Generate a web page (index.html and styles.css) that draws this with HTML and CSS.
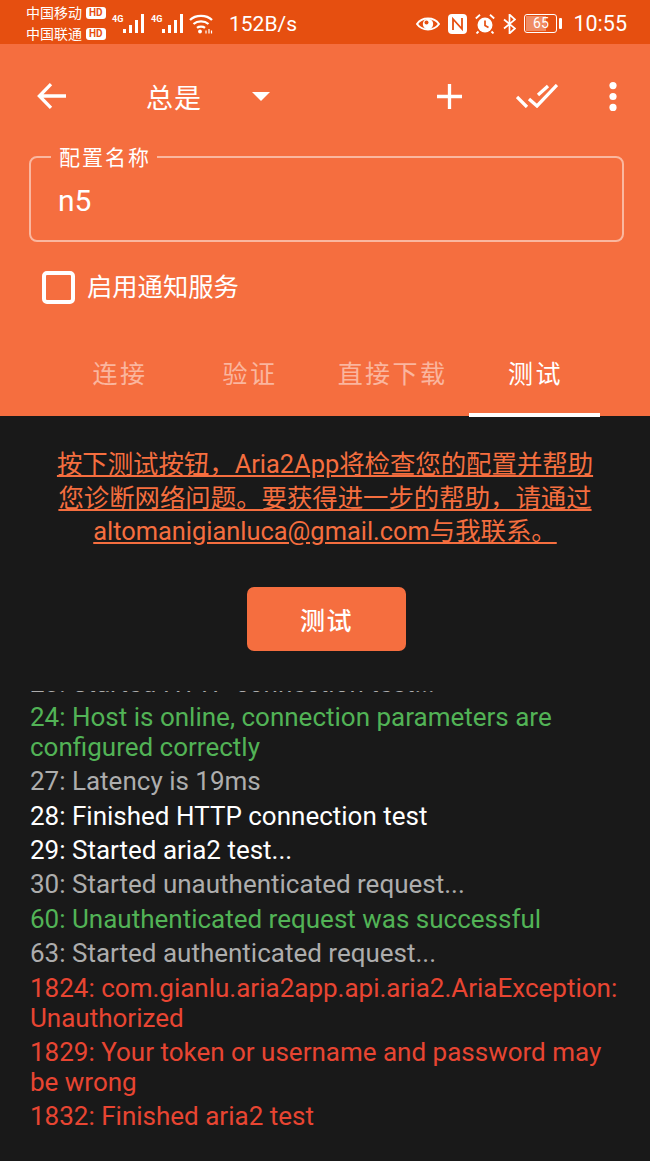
FILE: index.html
```html
<!DOCTYPE html>
<html lang="en">
  <head>
    <meta charset="UTF-8" />
    <meta name="viewport" content="width=device-width, initial-scale=1.0" />
    <title>Aria2App</title>
    <link rel="stylesheet" href="styles.css">
  </head>

  <body>
    <div class="status_bar">
      <div class="carriers">
        <div class="carrier"><span>中国移动</span><b class="hd">HD</b></div>
        <div class="carrier"><span>中国联通</span><b class="hd">HD</b></div>
      </div>
      <div class="signal">
        <span class="tag">4G</span>
        <svg width="21" height="20" viewBox="0 0 21 20" fill="#fff"><rect x="0" y="15" width="3" height="4"/><rect x="6" y="11" width="3" height="8"/><rect x="12" y="6" width="3" height="13"/><rect x="18" y="0" width="3" height="19"/></svg>
      </div>
      <div class="signal">
        <span class="tag">4G</span>
        <svg width="21" height="20" viewBox="0 0 21 20" fill="#fff"><rect x="0" y="15" width="3" height="4"/><rect x="6" y="11" width="3" height="8"/><rect x="12" y="6" width="3" height="13"/><rect x="18" y="0" width="3" height="19"/></svg>
      </div>
      <svg class="wifi" width="24" height="20" viewBox="0 0 24 20" fill="none" stroke="#fff" stroke-width="2.300"><path d="M1 6C6.500 0.500 17.500 0.500 23 6"/><path d="M4.500 10C8.500 6.500 15.500 6.500 19.500 10"/><path d="M8 13.800C10 12.300 14 12.300 16 13.800"/><circle cx="11" cy="17.500" r="1.900" fill="#fff" stroke="none"/><path d="M17 16.500v3M20 15v4.500M22.500 16.500v3" stroke-width="1.200"/></svg>
      <span class="speed">152B/s</span>
      <div class="status_right">
        <svg class="ic_eye" width="24" height="16" viewBox="0 0 24 16"><path d="M1 8C6 0.800 18 0.800 23 8C18 15.200 6 15.200 1 8Z" fill="none" stroke="#fff" stroke-width="2"/><circle cx="12" cy="8" r="5.200" fill="#fff"/><circle cx="10.500" cy="6.500" r="2" fill="#e64f10"/></svg>
        <svg class="ic_nfc" width="19" height="20" viewBox="0 0 19 20"><rect x="0" y="0" width="19" height="20" rx="4" fill="#fff"/><path d="M5 16V5L14 15V4" fill="none" stroke="#e64f10" stroke-width="1.800"/></svg>
        <svg class="ic_alarm" width="20" height="20" viewBox="0 0 20 20"><circle cx="10" cy="11" r="7.500" fill="#fff"/><path d="M10 6.500v5l3.500 2" fill="none" stroke="#e64f10" stroke-width="1.700"/><path d="M0.800 4.500L5 0.800M19.200 4.500L15 0.800M3.500 17.500l-2 2M16.500 17.500l2 2" stroke="#fff" stroke-width="1.800"/></svg>
        <svg class="ic_bt" width="13" height="20" viewBox="0 0 13 20" fill="none" stroke="#fff" stroke-width="1.700"><path d="M1 5.500L12 14.500L6.500 19.500V0.500L12 5.500L1 14.500"/></svg>
        <div class="battery">
          <div class="battery_body"><span class="battery_fill"></span><span class="battery_num">65</span></div>
          <span class="battery_tip"></span>
        </div>
        <span class="clock">10:55</span>
      </div>
    </div>

    <div class="head">
      <div class="toolbar">
        <svg class="back" width="29" height="26" viewBox="0 0 29 26" fill="none" stroke="#fff" stroke-width="3.300"><path d="M29 13H3M14 1.200L2.400 13L14 24.800"/></svg>
        <span class="spinner_text">总是</span>
        <span class="spinner_arrow"></span>
        <svg class="plus" width="25" height="25" viewBox="0 0 25 25" stroke="#fff" stroke-width="3.300"><path d="M12.500 0V25M0 12.500H25"/></svg>
        <svg class="checks" width="42" height="24" viewBox="0 0 42 24" fill="none" stroke="#fff" stroke-width="3.300"><path d="M1 13L11 23M13 15L21 22L41 1M22 11L32 2"/></svg>
        <svg class="more" width="8" height="29" viewBox="0 0 8 29" fill="#fff"><circle cx="4" cy="3.600" r="3.600"/><circle cx="4" cy="14.500" r="3.600"/><circle cx="4" cy="25.400" r="3.600"/></svg>
      </div>

      <div class="field">
        <label class="field_label">配置名称</label>
        <div class="field_value">n5</div>
      </div>

      <div class="check_row">
        <span class="checkbox"></span>
        <span>启用通知服务</span>
      </div>

      <div class="tabs">
        <div class="tab">连接</div>
        <div class="tab">验证</div>
        <div class="tab tab_wide">直接下载</div>
        <div class="tab active">测试</div>
      </div>
    </div>

    <div class="content">
      <p class="help">按下测试按钮，Aria2App将检查您的配置并帮助您诊断网络问题。要获得进一步的帮助，请通过altomanigianluca@gmail.com与我联系。</p>
      <button class="test_btn">测试</button>
      <div class="log">
        <div class="log_inner">
          <p class="grey">20: Started HTTP connection test...</p>
          <p class="green">24: Host is online, connection parameters are configured correctly</p>
          <p class="grey">27: Latency is 19ms</p>
          <p class="white">28: Finished HTTP connection test</p>
          <p class="white">29: Started aria2 test...</p>
          <p class="grey">30: Started unauthenticated request...</p>
          <p class="green">60: Unauthenticated request was successful</p>
          <p class="grey">63: Started authenticated request...</p>
          <p class="red">1824: com.gianlu.aria2app.api.aria2.AriaException: Unauthorized</p>
          <p class="red">1829: Your token or username and password may be wrong</p>
          <p class="red">1832: Finished aria2 test</p>
        </div>
      </div>
    </div>
  </body>
</html>
```

FILE: styles.css
```css
* {
  padding: 0;
  margin: 0;
  box-sizing: border-box;
}
body {
  width: 650px;
  height: 1161px;
  overflow: hidden;
  background: #191919;
  color: #fff;
  font-family: "Roboto", "Noto Sans CJK SC", sans-serif;
}

/* status bar */
.status_bar {
  height: 44px;
  padding: 3px 23px 0 26px;
  background: #e64f10;
  display: flex;
  align-items: center;
}
.carriers {
  width: 86px;
  font-size: 14px;
  line-height: 21px;
}
.carrier {
  display: flex;
  align-items: center;
  gap: 4px;
  white-space: nowrap;
}
.hd {
  background: #fff;
  color: #e64f10;
  font-size: 10px;
  line-height: 12px;
  padding: 0 3px;
  border-radius: 3px;
}
.signal {
  display: flex;
  align-items: flex-start;
  width: 39px;
}
.tag {
  width: 11px;
  margin: 1px 0 0;
  font-size: 9px;
  font-weight: 700;
  line-height: 9px;
}
.wifi {
  margin-left: -1px;
}
.speed {
  margin-left: 16px;
  font-size: 21px;
}
.status_right {
  margin-left: auto;
  display: flex;
  align-items: center;
  gap: 8px;
}
.battery {
  display: flex;
  align-items: center;
  gap: 2px;
}
.battery_body {
  position: relative;
  width: 33px;
  height: 19px;
  border: 1.500px solid #fff;
  border-radius: 3px;
  font-size: 14px;
  line-height: 16px;
  text-align: center;
}
.battery_fill {
  position: absolute;
  left: 1px;
  top: 1px;
  bottom: 1px;
  width: 20px;
  background: rgba(255, 255, 255, 0.35);
}
.battery_num {
  position: relative;
}
.battery_tip {
  width: 3px;
  height: 11px;
  background: #fff;
  border-radius: 1px;
}
.clock {
  margin-left: 3px;
  font-size: 21.500px;
}

/* orange head */
.head {
  height: 372px;
  background: #f56e3f;
}
.toolbar {
  height: 104px;
  padding-left: 37px;
  display: flex;
  align-items: center;
}
.spinner_text {
  margin-left: 80px;
  font-size: 27px;
  letter-spacing: 1px;
}
.spinner_arrow {
  margin-left: 50px;
  border-left: 9px solid transparent;
  border-right: 9px solid transparent;
  border-top: 9px solid #fff;
}
.plus {
  margin-left: 167px;
}
.checks {
  margin-left: 54px;
}
.more {
  margin-left: 51px;
}
.field {
  position: relative;
  width: 595px;
  height: 86px;
  margin: 8px 0 0 29px;
  padding: 25px 27px 0;
  border: 2px solid rgba(255, 255, 255, 0.5);
  border-radius: 8px;
}
.field_label {
  position: absolute;
  left: 20px;
  top: -13px;
  padding: 0 6px 0 8px;
  background: #f56e3f;
  font-size: 21px;
  letter-spacing: 2px;
  line-height: 26px;
}
.field_value {
  font-size: 30px;
  line-height: 36px;
}
.check_row {
  margin: 29px 0 0 42px;
  display: flex;
  align-items: center;
  gap: 12px;
  font-size: 25.300px;
  line-height: 33px;
}
.checkbox {
  width: 33px;
  height: 33px;
  border: 4px solid #fff;
  border-radius: 5px;
}
.tabs {
  margin-top: 46px;
  padding-left: 54px;
  display: flex;
}
.tab {
  width: 130px;
  height: 67px;
  padding: 8px 0 0 2px;
  text-align: center;
  font-size: 25px;
  letter-spacing: 2.400px;
  line-height: 34px;
  color: rgba(255, 255, 255, 0.5);
  border-bottom: 4px solid transparent;
}
.tab_wide {
  width: 155px;
}
.tab.active {
  width: 131px;
  color: #fff;
  border-bottom-color: #fff;
}

/* dark part */
.content {
  padding: 32px 30px 0;
}
.help {
  padding: 0 20px;
  text-align: center;
  font-size: 25.400px;
  line-height: 33.500px;
  color: #f56e3f;
  text-decoration: underline;
}
.test_btn {
  display: block;
  width: 159px;
  height: 64px;
  margin: 38px 0 0 217px;
  background: #f56e3f;
  border: none;
  border-radius: 7px;
  color: #fff;
  font-family: inherit;
  font-size: 25px;
  font-weight: 500;
  letter-spacing: 1.500px;
}
.log {
  height: 469px;
  margin-top: 40.500px;
  overflow: hidden;
}
.log_inner {
  margin-top: -23.500px;
  font-size: 26px;
  line-height: 30px;
}
.log p {
  margin-bottom: 4.400px;
}
.white {
  color: #fff;
}
.grey {
  color: #adadad;
}
.green {
  color: #52b356;
}
.red {
  color: #e84532;
}
```
